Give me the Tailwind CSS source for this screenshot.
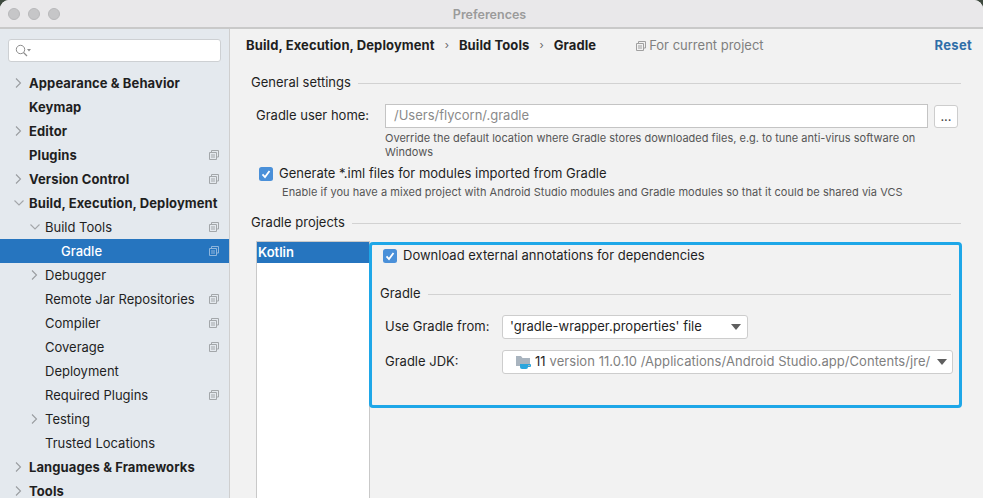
<!DOCTYPE html>
<html lang="en">
<head>
    <meta charset="UTF-8">
    <title>Preferences</title>
    <script src="https://cdn.jsdelivr.net/npm/@tailwindcss/browser@4"></script>
</head>
<body class="bg-[#3f4a3f] overflow-hidden font-['Inter','Liberation_Sans',sans-serif] text-[13px] text-[#1f1f1f]">

    <!-- shared icons -->
    <svg class="hidden">
        <symbol id="right" viewBox="0 0 10 12"><path d="M1 1.500 5.500 6 1 10.500" fill="none" stroke="#9a9da0" stroke-width="1.100"/></symbol>
        <symbol id="down" viewBox="0 0 12 10"><path d="M1.500 2.500 6 7l4.500-4.500" fill="none" stroke="#a4a7aa" stroke-width="1.100"/></symbol>
        <symbol id="proj" viewBox="0 0 10 10"><path d="M2.500 2.500V.5h7v6.500h-2M.5 2.500h7v7h-7zM2 5h4M2 7h4" fill="none" stroke="currentColor" stroke-width="1"/></symbol>
        <symbol id="check" viewBox="0 0 14 14"><rect width="14" height="14" rx="2.500" fill="#4a90d9"/><path d="M3.500 7.300 6 10l4.500-6" fill="none" stroke="#fff" stroke-width="1.800"/></symbol>
        <symbol id="caret" viewBox="0 0 10 6"><path d="M0 0h10L5 6z" fill="#5f5f5f"/></symbol>
    </svg>

    <div class="w-[983px] h-[498px] bg-[#f2f2f2] rounded-t-[9px] overflow-hidden flex flex-col">
        <!-- title bar -->
        <header class="h-[29px] shrink-0 bg-[#e9e8ea] border-b-2 border-[#c9c9c9] flex items-center relative pl-2">
            <div class="flex gap-2">
                <span class="w-3 h-3 rounded-full bg-[#c6c6c8] border border-[#b8b8ba]"></span>
                <span class="w-3 h-3 rounded-full bg-[#c6c6c8] border border-[#b8b8ba]"></span>
                <span class="w-3 h-3 rounded-full bg-[#c6c6c8] border border-[#b8b8ba]"></span>
            </div>
            <span class="absolute left-0 -right-[-4px] top-[7px] text-center font-semibold text-[#9b9b9b] text-[12.500px] leading-[16px]">Preferences</span>
        </header>

        <div class="flex flex-1 min-h-0">
            <!-- sidebar -->
            <aside class="w-[230px] shrink-0 bg-[#e4e9ee] border-r border-[#cfcfcf] pt-[10px]">
                <div class="mx-2 w-[213px] h-[23px] bg-white border border-[#cdd0d3] rounded-[3px] flex items-center pl-[6px]">
                    <svg class="w-[16px] h-[13px]" viewBox="0 0 16 13"><circle cx="5.500" cy="5.500" r="4.200" fill="none" stroke="#8d8d8d"/><path d="m8.500 8.500 3.500 3.500" stroke="#8d8d8d" stroke-width="1.200"/><path d="M12 5h4l-2 2.500z" fill="#8d8d8d"/></svg>
                </div>
                <nav class="mt-[9px] leading-[24px] whitespace-nowrap">
                    <div class="h-6 flex items-center pl-[15px] pr-[10px] font-bold tracking-[0.1px]"><svg class="w-[10px] h-[12px] mr-[4px]"><use href="#right"/></svg>Appearance &amp; Behavior</div>
                    <div class="h-6 flex items-center pl-[29px] pr-[10px] font-bold tracking-[0.1px]">Keymap</div>
                    <div class="h-6 flex items-center pl-[15px] pr-[10px] font-bold tracking-[0.1px]"><svg class="w-[10px] h-[12px] mr-[4px]"><use href="#right"/></svg>Editor</div>
                    <div class="h-6 flex items-center pl-[29px] pr-[10px] font-bold tracking-[0.1px]">Plugins<svg class="w-[10px] h-[10px] ml-auto text-[#a3a7aa]"><use href="#proj"/></svg></div>
                    <div class="h-6 flex items-center pl-[15px] pr-[10px] font-bold tracking-[0.1px]"><svg class="w-[10px] h-[12px] mr-[4px]"><use href="#right"/></svg>Version Control<svg class="w-[10px] h-[10px] ml-auto text-[#a3a7aa]"><use href="#proj"/></svg></div>
                    <div class="h-6 flex items-center pl-[13px] pr-[10px] font-bold tracking-[0.1px]"><svg class="w-[12px] h-[10px] mr-[4px]"><use href="#down"/></svg>Build, Execution, Deployment</div>
                    <div class="h-6 flex items-center pl-[29px] pr-[10px]"><svg class="w-[12px] h-[10px] mr-[4px]"><use href="#down"/></svg>Build Tools<svg class="w-[10px] h-[10px] ml-auto text-[#a3a7aa]"><use href="#proj"/></svg></div>
                    <div class="h-6 flex items-center pl-[61px] pr-[10px] bg-[#2675bf] text-white font-medium">Gradle<svg class="w-[10px] h-[10px] ml-auto text-[#8fb6dc]"><use href="#proj"/></svg></div>
                    <div class="h-6 flex items-center pl-[31px] pr-[10px]"><svg class="w-[10px] h-[12px] mr-[4px]"><use href="#right"/></svg>Debugger</div>
                    <div class="h-6 flex items-center pl-[45px] pr-[10px]">Remote Jar Repositories<svg class="w-[10px] h-[10px] ml-auto text-[#a3a7aa]"><use href="#proj"/></svg></div>
                    <div class="h-6 flex items-center pl-[45px] pr-[10px]">Compiler<svg class="w-[10px] h-[10px] ml-auto text-[#a3a7aa]"><use href="#proj"/></svg></div>
                    <div class="h-6 flex items-center pl-[45px] pr-[10px]">Coverage<svg class="w-[10px] h-[10px] ml-auto text-[#a3a7aa]"><use href="#proj"/></svg></div>
                    <div class="h-6 flex items-center pl-[45px] pr-[10px]">Deployment</div>
                    <div class="h-6 flex items-center pl-[45px] pr-[10px]">Required Plugins<svg class="w-[10px] h-[10px] ml-auto text-[#a3a7aa]"><use href="#proj"/></svg></div>
                    <div class="h-6 flex items-center pl-[31px] pr-[10px]"><svg class="w-[10px] h-[12px] mr-[4px]"><use href="#right"/></svg>Testing</div>
                    <div class="h-6 flex items-center pl-[45px] pr-[10px]">Trusted Locations</div>
                    <div class="h-6 flex items-center pl-[15px] pr-[10px] font-bold tracking-[0.1px]"><svg class="w-[10px] h-[12px] mr-[4px]"><use href="#right"/></svg>Languages &amp; Frameworks</div>
                    <div class="h-6 flex items-center pl-[15px] pr-[10px] font-bold tracking-[0.1px]"><svg class="w-[10px] h-[12px] mr-[4px]"><use href="#right"/></svg>Tools</div>
                </nav>
            </aside>

            <!-- content -->
            <main class="flex-1 min-w-0 flex flex-col">
                <div class="h-[33px] flex items-center pl-[16px] pr-[11px]">
                    <span class="font-bold tracking-[0.1px]">Build, Execution, Deployment</span>
                    <span class="mx-[10px] text-[#666] text-[11px]">›</span>
                    <span class="font-bold tracking-[0.1px]">Build Tools</span>
                    <span class="mx-[10px] text-[#666] text-[11px]">›</span>
                    <span class="font-bold tracking-[0.1px]">Gradle</span>
                    <svg class="w-[10px] h-[10px] ml-[40px] mr-[3px] text-[#a0a0a0]"><use href="#proj"/></svg>
                    <span class="text-[#7f7f7f]">For current project</span>
                    <span class="ml-auto font-bold text-[#2f6ea8] tracking-[0.3px]">Reset</span>
                </div>

                <section class="pl-[21px] pr-[22px] pt-[12px]">
                    <div class="h-[18px] flex items-center gap-[7px]"><span>General settings</span><span class="flex-1 h-px bg-[#d2d2d2]"></span></div>
                    <div class="mt-[12px] h-[24px] flex items-center pl-[5px]">
                        <span class="w-[129px] shrink-0">Gradle user home:</span>
                        <div class="w-[543px] h-[24px] shrink-0 bg-white border border-[#c4c4c4] flex items-center pl-[8px] text-[#8a8a8a]">/Users/flycorn/.gradle</div>
                        <div class="ml-[6px] w-[24px] h-[23px] bg-white border border-[#cdcdcd] rounded-[3px] flex items-center justify-center text-[#444] leading-none">...</div>
                    </div>
                    <p class="mt-[3px] ml-[134px] w-[545px] text-[11px] leading-[14px] text-[#555]">Override the default location where Gradle stores downloaded files, e.g. to tune anti-virus software on Windows</p>
                    <div class="mt-[7px] h-[16px] flex items-center pl-[8px]">
                        <svg class="w-[14px] h-[14px] mr-[6px]"><use href="#check"/></svg>
                        <span>Generate *.iml files for modules imported from Gradle</span>
                    </div>
                    <p class="mt-[2px] ml-[31px] text-[11px] leading-[16px] text-[#555] tracking-[0.04px]">Enable if you have a mixed project with Android Studio modules and Gradle modules so that it could be shared via VCS</p>
                    <div class="mt-[14px] h-[18px] flex items-center gap-[7px]"><span>Gradle projects</span><span class="flex-1 h-px bg-[#d2d2d2]"></span></div>
                </section>

                <div class="mt-[9px] ml-[26px] mr-[21px] flex flex-1 min-h-0">
                    <div class="w-[114px] shrink-0 bg-white border border-[#c9c9c9] border-b-0">
                        <div class="h-[21px] bg-[#2675bf] text-white font-semibold flex items-center pl-[1px]">Kotlin</div>
                    </div>
                    <div class="flex-1 h-[166px] mt-[1px] border-[3px] border-[#1ea7e8] rounded-[4px] pt-[3px] -ml-[1px]">
                        <div class="h-[16px] flex items-center pl-[11px]">
                            <svg class="w-[14px] h-[14px] mr-[6px]"><use href="#check"/></svg>
                            <span>Download external annotations for dependencies</span>
                        </div>
                        <div class="mt-[21px] h-[18px] flex items-center gap-[7px] pl-[8px] pr-[8px]"><span>Gradle</span><span class="flex-1 h-px bg-[#d2d2d2]"></span></div>
                        <div class="mt-[12px] h-[24px] flex items-center pl-[13px]">
                            <span class="w-[117px] shrink-0">Use Gradle from:</span>
                            <div class="w-[246px] h-[24px] bg-white border border-[#cdcdcd] rounded-[3px] flex items-center pl-[7px] pr-[6px]">'gradle-wrapper.properties' file<svg class="w-[10px] h-[6px] ml-auto"><use href="#caret"/></svg></div>
                        </div>
                        <div class="mt-[11px] h-[24px] flex items-center pl-[13px]">
                            <span class="w-[117px] shrink-0">Gradle JDK:</span>
                            <div class="w-[451px] h-[24px] bg-white border border-[#cdcdcd] rounded-[3px] flex items-center pl-[13px] pr-[5px] whitespace-nowrap">
                                <svg class="w-[16px] h-[15px] mr-[3px] shrink-0" viewBox="0 0 16 15"><path d="M0 1h5l1.500 2H14v8H0z" fill="#a9b4bf"/><path d="M4 9h8v3a2 2 0 0 1-2 2H6a2 2 0 0 1-2-2z" fill="#2aa5dc"/><path d="M12 9.500h2.500v2H12" fill="none" stroke="#2aa5dc"/></svg>
                                <span>11</span><span class="ml-[4px] text-[#7f7f7f] tracking-[0.05px]">version 11.0.10 /Applications/Android Studio.app/Contents/jre/</span>
                                <svg class="w-[10px] h-[6px] ml-auto shrink-0"><use href="#caret"/></svg>
                            </div>
                        </div>
                    </div>
                </div>
            </main>
        </div>
    </div>

</body>
</html>
